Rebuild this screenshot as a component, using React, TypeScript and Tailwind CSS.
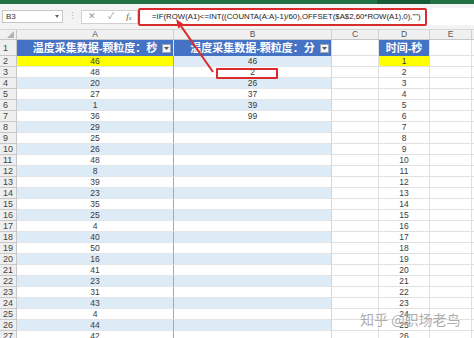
import React from "react";

const A = [46, 48, 20, 27, 1, 36, 29, 25, 26, 48, 8, 39, 23, 35, 25, 4, 40, 50, 16, 41, 23, 31, 43, 4, 44, 42];
const B: (number | null)[] = [46, 2, 26, 37, 39, 99];

function Dropdown() {
  return (
    <div className="absolute right-[2px] top-[4px] w-[9px] h-[9px] bg-[#f4f4f4] border border-[#9aa7bb] flex items-center justify-center">
      <svg width="5" height="3" viewBox="0 0 5 3">
        <polygon points="0,0 5,0 2.5,3" fill="#555" />
      </svg>
    </div>
  );
}

export default function App() {
  const rows = A.map((a, i) => {
    const r = i + 2;
    const even = r % 2 === 0;
    const aBg = r === 2 ? "bg-[#ffff00]" : even ? "bg-[#ddebf7]" : "bg-white";
    const bBg = even ? "bg-[#ddebf7]" : "bg-white";
    const dBg = r === 2 ? "bg-[#ffff00]" : "bg-white";
    const b = B[i];
    return (
      <div key={r} className="flex h-[11px] text-[8.5px] leading-[10px] text-[#3a3a3a]">
        <div className="w-[17px] shrink-0 bg-[#efefef] border-r border-b border-[#c8c8c8] pl-[3px] text-[9px] text-[#444]">{r}</div>
        <div className={`w-[157px] shrink-0 ${aBg} border-r border-r-[#a8a8a8] border-b border-b-[#e2e6ea] text-center`}>{a}</div>
        <div className={`w-[158px] shrink-0 ${bBg} border-r border-r-[#c9d7ea] border-b border-b-[#e2e6ea] text-center`}>{b ?? ""}</div>
        <div className="w-[47px] shrink-0 bg-white border-r border-b border-[#e1e1e1]"></div>
        <div className={`w-[51px] shrink-0 ${dBg} border-r border-b border-[#e1e1e1] text-center`}>{r - 1}</div>
        <div className="w-[42px] shrink-0 bg-white border-r border-b border-[#e1e1e1]"></div>
        <div className="flex-1 bg-white border-b border-[#e1e1e1]"></div>
      </div>
    );
  });

  return (
    <div
      className="relative w-[474px] h-[338px] overflow-hidden bg-white"
      style={{ fontFamily: '"Liberation Sans", "Noto Sans CJK SC", sans-serif' }}
    >
      {/* title bar */}
      <div className="flex h-[4px] bg-[#217346]">
        <div className="w-[377px]"></div>
        <div className="w-[53px] bg-[#185c37]"></div>
      </div>

      {/* formula bar */}
      <div className="flex items-center h-[26px] bg-[#f3f3f3] border-b border-[#d6d6d6]">
        <div className="ml-[2px] w-[61px] h-[13px] bg-white border border-[#c6c6c6] flex items-center justify-between px-[3px]">
          <span className="text-[8px] text-[#333]">B3</span>
          <svg width="4" height="3" viewBox="0 0 4 3">
            <polygon points="0,0 4,0 2,3" fill="#666" />
          </svg>
        </div>
        <div className="w-[18px] flex justify-center text-[9px] text-[#aaa] leading-none">⋮</div>
        <div className="w-[57px] h-[14px] bg-white border border-[#d0d0d0] flex items-center text-[#999]">
          <span className="ml-[6px] text-[9px]">✕</span>
          <span className="ml-[12px] text-[9px]">✓</span>
          <span className="ml-[12px] text-[9px] italic text-[#555]" style={{ fontFamily: '"Liberation Serif", serif' }}>f<sub className="text-[6px]">x</sub></span>
        </div>
        <div className="ml-[3px] flex-1 h-[17px] bg-white flex items-center">
          <span className="ml-[11px] text-[7.8px] text-[#222] whitespace-nowrap">
            =IF(ROW(A1)&lt;=INT((COUNTA(A:A)-1)/60),OFFSET($A$2,60*ROW(A1),0),"")
          </span>
        </div>
      </div>

      {/* column header */}
      <div className="flex h-[10px] bg-[#f0f0f0] text-[8.5px] leading-[9px] text-[#555] border-b border-[#c6c6c6]">
        <div className="w-[17px] shrink-0 border-r border-[#c6c6c6] relative">
          <svg className="absolute right-[2px] bottom-[1px]" width="7" height="7" viewBox="0 0 7 7">
            <polygon points="7,0 7,7 0,7" fill="#b4b4b4" />
          </svg>
        </div>
        <div className="w-[157px] shrink-0 border-r border-[#d0d0d0] text-center">A</div>
        <div className="w-[158px] shrink-0 border-r border-[#d0d0d0] text-center">B</div>
        <div className="w-[47px] shrink-0 border-r border-[#d0d0d0] text-center">C</div>
        <div className="w-[51px] shrink-0 border-r border-[#d0d0d0] text-center">D</div>
        <div className="w-[42px] shrink-0 border-r border-[#d0d0d0] text-center">E</div>
        <div className="flex-1"></div>
      </div>

      {/* row 1 header */}
      <div className="flex h-[16px]">
        <div className="w-[17px] shrink-0 bg-[#efefef] border-r border-b border-[#c8c8c8] pl-[3px] text-[9px] leading-[16px] text-[#444]">1</div>
        <div className="relative w-[157px] shrink-0 bg-[#4472c4] border-r border-[#dfe6f3] text-center text-white font-bold text-[11px] leading-[16px]">
          温度采集数据-颗粒度：秒
          <Dropdown />
        </div>
        <div className="relative w-[158px] shrink-0 bg-[#4472c4] border-r border-[#c9d7ea] text-center text-white font-bold text-[11px] leading-[16px]">
          温度采集数据-颗粒度：分
          <Dropdown />
        </div>
        <div className="w-[47px] shrink-0 bg-white border-r border-b border-[#e1e1e1]"></div>
        <div className="w-[51px] shrink-0 bg-[#4472c4] border-r border-[#e1e1e1] text-center text-white font-bold text-[11px] leading-[16px]">时间-秒</div>
        <div className="w-[42px] shrink-0 bg-white border-r border-b border-[#e1e1e1]"></div>
        <div className="flex-1 bg-white border-b border-[#e1e1e1]"></div>
      </div>

      {rows}

      {/* annotations */}
      <div className="absolute left-[138px] top-[8px] w-[289px] h-[18px] border-2 border-[#d92b2b] rounded-[2px]"></div>
      <div className="absolute left-[216px] top-[68px] w-[62px] h-[11px] border-2 border-[#d92b2b] rounded-[1px]"></div>
      <svg className="absolute left-0 top-0" width="474" height="338" viewBox="0 0 474 338">
        <line x1="213" y1="72" x2="181.2" y2="26.4" stroke="#d92b2b" strokeWidth="2" />
        <polygon points="176,19 184.1,24.4 178.3,28.4" fill="#d92b2b" />
      </svg>

      {/* watermark */}
      <div
        className="absolute left-[360px] top-[310px] text-[14px] leading-[18px] text-[#9a9a9a] opacity-80 whitespace-nowrap"
        style={{ fontFamily: '"Noto Sans CJK SC", sans-serif', textShadow: "0 0 1px #fff" }}
      >
        知乎 @职场老鸟
      </div>
    </div>
  );
}
